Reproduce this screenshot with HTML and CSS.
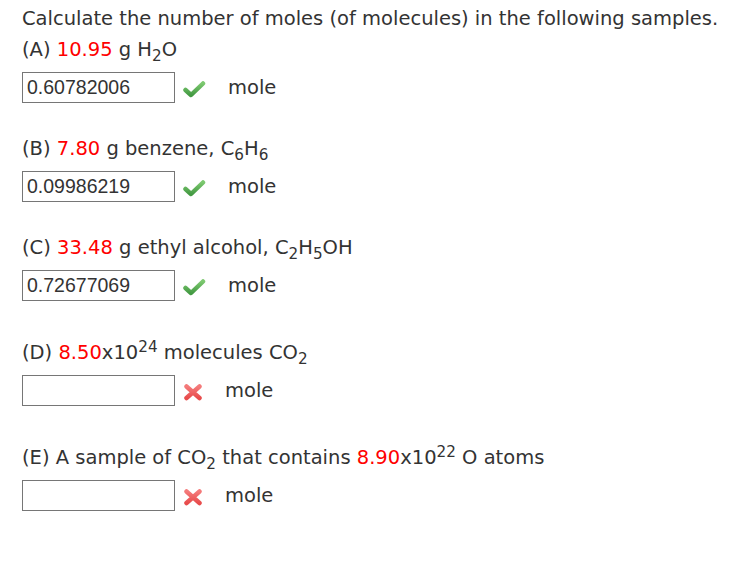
FILE: index.html
```html
<!DOCTYPE html>
<html lang="en">
<head>
  <meta charset="UTF-8" />
  <title>Moles of molecules</title>
  <meta name="viewport" content="width=device-width, initial-scale=1" />
  <link rel="stylesheet" href="styles.css">
</head>
<body>
  <svg class="defs" width="0" height="0">
    <defs>
      <linearGradient id="okGrad" x1="0" y1="0" x2="0" y2="1">
        <stop offset="0" stop-color="#7cc86f" />
        <stop offset="1" stop-color="#449a43" />
      </linearGradient>
      <linearGradient id="badGrad" x1="0" y1="0" x2="0" y2="1">
        <stop offset="0" stop-color="#f47a7a" />
        <stop offset="1" stop-color="#e84c4c" />
      </linearGradient>
    </defs>
  </svg>
  <div class="question">
    <p class="intro">Calculate the number of moles (of molecules) in the following samples.</p>

    <div class="part">
      <p class="label">(A) <span class="given">10.95</span> g H<sub>2</sub>O</p>
      <div class="answer">
        <input type="text" class="field" value="0.60782006" />
        <svg class="mark check" width="24" height="18" viewBox="0 0 24 18">
          <path d="M3.5 10 L9 15 L21 3.5" />
        </svg>
        <span class="unit">mole</span>
      </div>
    </div>

    <div class="part">
      <p class="label">(B) <span class="given">7.80</span> g benzene, C<sub>6</sub>H<sub>6</sub></p>
      <div class="answer">
        <input type="text" class="field" value="0.09986219" />
        <svg class="mark check" width="24" height="18" viewBox="0 0 24 18">
          <path d="M3.5 10 L9 15 L21 3.5" />
        </svg>
        <span class="unit">mole</span>
      </div>
    </div>

    <div class="part">
      <p class="label">(C) <span class="given">33.48</span> g ethyl alcohol, C<sub>2</sub>H<sub>5</sub>OH</p>
      <div class="answer">
        <input type="text" class="field" value="0.72677069" />
        <svg class="mark check" width="24" height="18" viewBox="0 0 24 18">
          <path d="M3.5 10 L9 15 L21 3.5" />
        </svg>
        <span class="unit">mole</span>
      </div>
    </div>

    <div class="part">
      <p class="label tall">(D) <span class="given">8.50</span>x10<sup>24</sup> molecules CO<sub>2</sub></p>
      <div class="answer">
        <input type="text" class="field" value="" />
        <svg class="mark cross" width="22" height="18" viewBox="0 0 22 18">
          <path d="M4.5 3.5 L17.5 15 M17.5 3.5 L4.5 15" />
        </svg>
        <span class="unit">mole</span>
      </div>
    </div>

    <div class="part">
      <p class="label tall">(E) A sample of CO<sub>2</sub> that contains <span class="given">8.90</span>x10<sup>22</sup> O atoms</p>
      <div class="answer">
        <input type="text" class="field" value="" />
        <svg class="mark cross" width="22" height="18" viewBox="0 0 22 18">
          <path d="M4.5 3.5 L17.5 15 M17.5 3.5 L4.5 15" />
        </svg>
        <span class="unit">mole</span>
      </div>
    </div>
  </div>
</body>
</html>
```

FILE: styles.css
```css
body {
  margin: 0;
  background: #fff;
  color: #333;
  font-family: "DejaVu Sans", Verdana, sans-serif;
  font-size: 19.5px;
}
.defs {
  position: absolute;
}
.question {
  padding: 4px 0 0 22px;
}
p {
  margin: 0;
}
.intro {
  line-height: 30px;
}
.label {
  line-height: 30px;
  padding-top: 1px;
}
.label.tall {
  padding-top: 7px;
}
.part {
  margin-bottom: 30px;
}
.given {
  color: #f00;
}
sub, sup {
  font-size: 78%;
  line-height: 0;
}
.answer {
  display: flex;
  align-items: center;
  margin-top: 7px;
}
.field {
  box-sizing: border-box;
  width: 153px;
  height: 31px;
  margin: 0;
  padding: 0 4px;
  border: 1px solid #767676;
  border-radius: 0;
  font-family: "Liberation Sans", Arial, sans-serif;
  font-size: 19.5px;
  color: #333;
}
.mark {
  margin-left: 7px;
  margin-top: 3px;
  fill: none;
  stroke-linecap: round;
  stroke-linejoin: round;
}
.check {
  stroke: url(#okGrad);
  stroke-width: 4.5;
}
.cross {
  stroke: url(#badGrad);
  stroke-width: 4.5;
}
.unit {
  margin-left: 22px;
}
.cross + .unit {
  margin-left: 21px;
}
```
